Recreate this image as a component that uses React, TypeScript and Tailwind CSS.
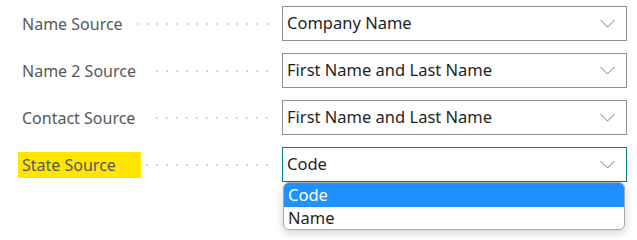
const ROWS = [
  { label: "Name Source", value: "Company Name" },
  { label: "Name 2 Source", value: "First Name and Last Name" },
  { label: "Contact Source", value: "First Name and Last Name" },
  { label: "State Source", value: "Code", focused: true, marked: true },
];

function Leader() {
  return (
    <div className="flex-1 h-[4px] ml-[14px] mr-[10px] bg-[radial-gradient(circle,#d2d2d2_1px,transparent_1.4px)] bg-[length:10px_4px] bg-repeat-x bg-[position:right_center]" />
  );
}

function Chevron() {
  return (
    <svg width="15" height="9" viewBox="0 0 15 9" fill="none" className="text-[#7a7a7a]">
      <polyline points="0.5,1 7.5,8 14.5,1" stroke="currentColor" strokeWidth="1" />
    </svg>
  );
}

export default function App() {
  return (
    <div className="w-[637px] h-[240px] bg-white pt-[6px] font-['Segoe_UI','Noto_Sans',sans-serif]">
      <div className="flex flex-col gap-[12px]">
        {ROWS.map((row) => (
          <div key={row.label} className="flex items-center h-[35px] pl-[22px] pr-[10px]">
            <div className="relative text-[16px] text-[#585858] whitespace-nowrap">
              {row.marked && (
                <span className="absolute -left-[4px] -right-[25px] top-[-1px] bottom-[-1px] bg-[#ffe600]" />
              )}
              <span className="relative">{row.label}</span>
            </div>
            <Leader />
            <div className="relative w-[345px] shrink-0">
              <div
                className={
                  "flex items-center justify-between h-[35px] pl-[4px] pr-[11px] border text-[16.5px] text-[#1f1f1f] bg-white " +
                  (row.focused ? "border-[#037f7e]" : "border-[#8c919a]")
                }
              >
                <span>{row.value}</span>
                <Chevron />
              </div>
              {row.focused && (
                <div className="absolute left-[1px] top-[35px] w-[342px] rounded-[6px] border border-[#a9a9a9] bg-white overflow-hidden shadow-[0_3px_10px_rgba(0,0,0,0.18)] text-[16.5px]">
                  <div className="h-[24px] leading-[24px] pl-[4px] bg-[#1e90ff] text-white">Code</div>
                  <div className="h-[22px] leading-[22px] pl-[4px] text-[#1f1f1f]">Name</div>
                </div>
              )}
            </div>
          </div>
        ))}
      </div>
    </div>
  );
}
